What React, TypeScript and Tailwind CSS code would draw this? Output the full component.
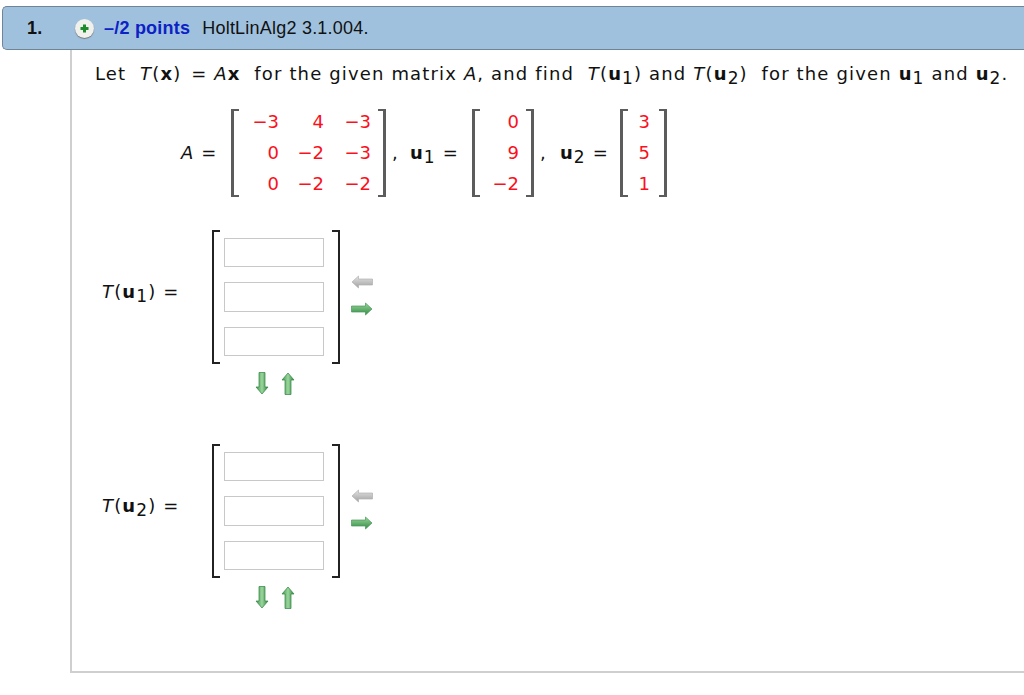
import React from "react";

const mathFont = "font-['DejaVu_Sans',sans-serif] text-[18px] tracking-[1.15px] leading-[24px] text-[#111]";

const Sub = ({ n }: { n: string }) => (
  <span className="relative top-[4px] text-[17px] leading-none">{n}</span>
);

const U = ({ n }: { n: string }) => (
  <span>
    <b>u</b>
    <Sub n={n} />
  </span>
);

const MatBracket = ({ side }: { side: "l" | "r" }) => (
  <div
    className={`w-[8px] self-stretch border-y-2 border-[#5c5c5c] ${side === "l" ? "border-l-[3px]" : "border-r-[3px]"}`}
  />
);

const AnsBracket = ({ side }: { side: "l" | "r" }) => (
  <div
    className={`w-[8px] self-stretch border-y-2 border-[#222] ${side === "l" ? "border-l-2" : "border-r-2"}`}
  />
);

const Matrix = ({ rows, cols, pad }: { rows: string[][]; cols: string; pad: string }) => (
  <div className="flex h-[88px]">
    <MatBracket side="l" />
    <div className={`grid ${cols} ${pad} auto-rows-[31px] content-center items-center text-right tracking-normal text-[#fb1020]`}>
      {rows.flat().map((c, i) => (
        <span key={i}>{c}</span>
      ))}
    </div>
    <MatBracket side="r" />
  </div>
);

const HArrow = ({ dir, gray }: { dir: "left" | "right"; gray?: boolean }) => {
  const id = gray ? "hgray" : "hgreen";
  return (
    <svg width="22" height="14" viewBox="0 0 22 14" className="block">
      <defs>
        <linearGradient id={id} x1="0" y1="0" x2="0" y2="1">
          <stop offset="0" stopColor={gray ? "#e4e4e4" : "#9ad69b"} />
          <stop offset="1" stopColor={gray ? "#a0a0a0" : "#338c46"} />
        </linearGradient>
      </defs>
      <g transform={dir === "left" ? "matrix(-1 0 0 1 22 0)" : undefined}>
        <path
          d="M0.5 4H14.5V1L21 7L14.5 13V10H0.5Z"
          fill={`url(#${id})`}
          stroke={gray ? "#b0b0b0" : "#47975a"}
          strokeOpacity="0.7"
        />
      </g>
    </svg>
  );
};

const VArrow = ({ dir }: { dir: "up" | "down" }) => (
  <svg width="14" height="23" viewBox="0 0 14 23" className="block">
    <defs>
      <linearGradient id="vgreen" x1="0" y1="0" x2="1" y2="0">
        <stop offset="0" stopColor="#3f9450" />
        <stop offset="0.5" stopColor="#9ad69b" />
        <stop offset="1" stopColor="#2f8242" />
      </linearGradient>
    </defs>
    <g transform={dir === "down" ? "matrix(1 0 0 -1 0 23)" : undefined}>
      <path d="M4 22.5V8H1L7 1L13 8H10V22.5Z" fill="url(#vgreen)" stroke="#358a48" strokeOpacity="0.75" />
    </g>
  </svg>
);

const Answer = ({ n }: { n: string }) => (
  <div className="flex flex-col">
    <div className="flex items-center">
      <div className={`${mathFont} mb-[10px] w-[117px] pl-[7px]`}>
        <i>T</i>(<U n={n} />) =
      </div>
      <div className="flex h-[134px]">
        <AnsBracket side="l" />
        <div className="flex w-[112px] flex-col gap-[15px] px-[4px] py-[8px]">
          <div className="h-[30px] w-[100px] border border-[#c8c8c8] bg-white" />
          <div className="h-[30px] w-[100px] border border-[#c8c8c8] bg-white" />
          <div className="h-[30px] w-[100px] border border-[#c8c8c8] bg-white" />
        </div>
        <AnsBracket side="r" />
      </div>
      <div className="ml-[11px] mt-[-3px] flex flex-col gap-[13px]">
        <HArrow dir="left" gray />
        <HArrow dir="right" />
      </div>
    </div>
    <div className="ml-[160px] mt-[8px] flex gap-[12px]">
      <VArrow dir="down" />
      <VArrow dir="up" />
    </div>
  </div>
);

export default function App() {
  return (
    <div className="h-[695px] w-[1024px] overflow-hidden bg-white pt-[6px]">
      <div className="ml-[2px] flex h-[44px] items-center rounded-l-[5px] border border-r-0 border-[#6f8496] bg-[#9fc1de] font-['Liberation_Sans',sans-serif] text-[18px] tracking-[0.22px]">
        <b className="ml-[24px] w-[48px] text-[#111]">1.</b>
        <span className="flex h-[19px] w-[19px] items-center justify-center rounded-full bg-[#f0f0ec] shadow-[0_1px_1px_#777]">
          <svg width="11" height="11" viewBox="0 0 11 11">
            <path d="M4 1.5H7V4H9.5V7H7V9.5H4V7H1.5V4H4Z" fill="#1d8a2c" />
          </svg>
        </span>
        <b className="ml-[10px] text-[#0c22c4]">–/2 points</b>
        <span className="ml-[12px] text-[#111]">HoltLinAlg2 3.1.004.</span>
      </div>
      <div className="ml-[70px] h-[623px] border-b-2 border-l-2 border-[#cfcfcf] pl-[23px]">
        <div className={`${mathFont} whitespace-pre pt-[12px]`}>
          Let  <i>T</i>(<b>x</b>)<span className="ml-[3px]"> = </span><i>A</i><b>x</b>  for the given matrix <i>A</i>, and find  <i>T</i>(<U n="1" />) and <i>T</i>(<U n="2" />)  for the given <U n="1" /> and <U n="2" />.
        </div>
        <div className={`${mathFont} ml-[86px] mt-[23px] flex items-center whitespace-pre`}>
          <span className="w-[50px]"><i>A</i> =</span>
          <Matrix
            cols="grid-cols-[40px_45px_47px]"
            pad="pr-[7px]"
            rows={[
              ["−3", "4", "−3"],
              ["0", "−2", "−3"],
              ["0", "−2", "−2"],
            ]}
          />
          <span className="w-[86px] pl-[6px]">,<span className="ml-[11px]"><U n="1" /> =</span></span>
          <Matrix cols="grid-cols-[39px]" pad="pr-[7px]" rows={[["0"], ["9"], ["−2"]]} />
          <span className="w-[86px] pl-[6px]">,<span className="ml-[13px]"><U n="2" /> =</span></span>
          <Matrix cols="grid-cols-[22px]" pad="pr-[9px]" rows={[["3"], ["5"], ["1"]]} />
        </div>
        <div className="mt-[33px] flex flex-col gap-[49px]">
          <Answer n="1" />
          <Answer n="2" />
        </div>
      </div>
    </div>
  );
}
